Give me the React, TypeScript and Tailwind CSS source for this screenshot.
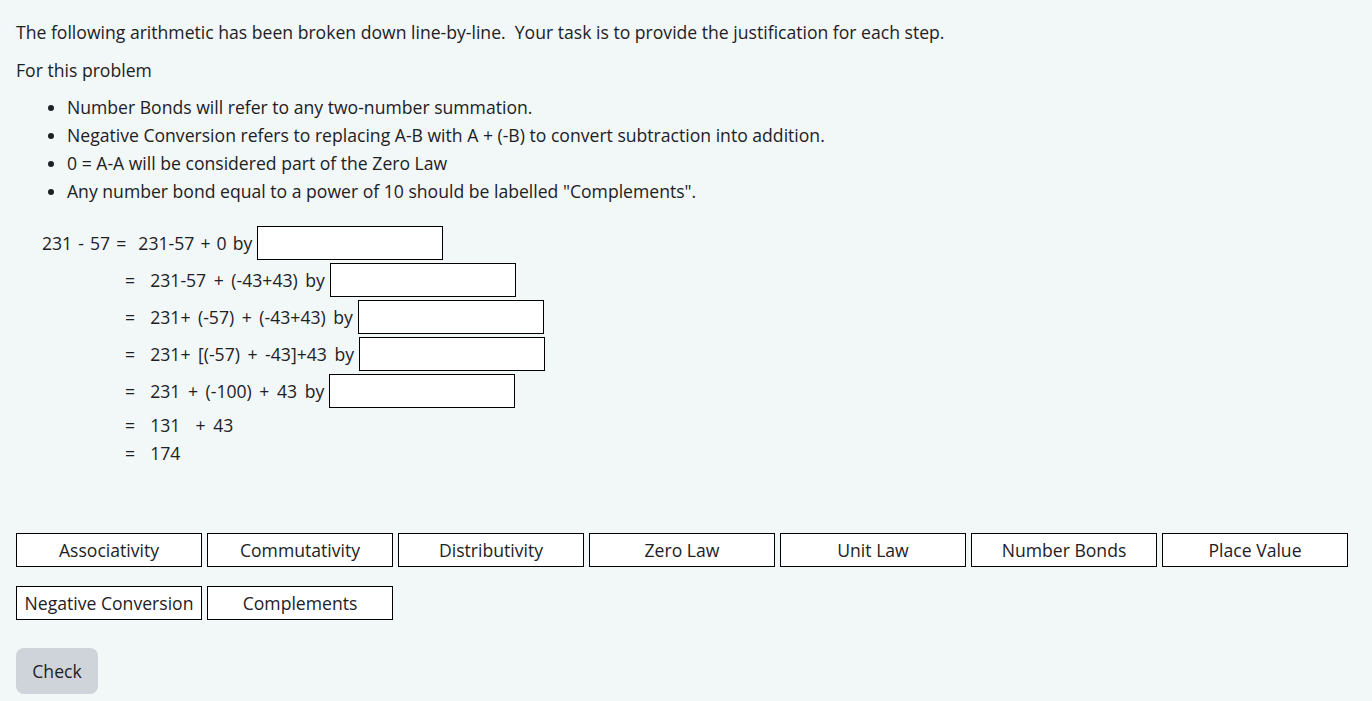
const bullets = [
  "Number Bonds will refer to any two-number summation.",
  "Negative Conversion refers to replacing A-B with A + (-B) to convert subtraction into addition.",
  "0 = A-A will be considered part of the Zero Law",
  'Any number bond equal to a power of 10 should be labelled "Complements".',
];

const steps = [
  { lead: "231 - 57 =\u00a0\u00a0231-57 + 0 by", indent: false },
  { lead: "=\u00a0\u00a0231-57 + (-43+43) by", indent: true },
  { lead: "=\u00a0\u00a0231+ (-57) + (-43+43) by", indent: true },
  { lead: "=\u00a0\u00a0231+ [(-57) + -43]+43 by", indent: true },
  { lead: "=\u00a0\u00a0231 + (-100) + 43 by", indent: true },
];

const choices = [
  "Associativity",
  "Commutativity",
  "Distributivity",
  "Zero Law",
  "Unit Law",
  "Number Bonds",
  "Place Value",
  "Negative Conversion",
  "Complements",
];

function DropBox() {
  return <span className="ml-[5px] inline-block h-[34px] w-[186px] border border-black bg-white align-middle" />;
}

export default function App() {
  return (
    <div
      className="min-h-[701px] bg-[#f2f7f7] px-4 pt-[18px] text-[17.6px] leading-[28px] text-[#1d2125]"
      style={{ fontFamily: '"Open Sans", "Noto Sans", sans-serif' }}
    >
      <p className="mb-[10px]">
        The following arithmetic has been broken down line-by-line.&nbsp; Your task is to provide the justification for each step.
      </p>
      <p>For this problem</p>
      <ul className="mt-[9px] list-disc pl-[51px]">
        {bullets.map((b) => (
          <li key={b}>{b}</li>
        ))}
      </ul>

      <div className="mt-[21px] flex flex-col gap-[3px]">
        {steps.map((s) => (
          <div
            key={s.lead}
            className={`flex items-center ${s.indent ? "pl-[109px] [word-spacing:3px]" : "pl-[26px] [word-spacing:1.5px]"}`}
          >
            <span className="whitespace-pre">{s.lead}</span>
            <DropBox />
          </div>
        ))}
      </div>
      <div className="mt-[3px] pl-[109px] [word-spacing:3px]">
        <div className="whitespace-pre">{"=\u00a0\u00a0131\u00a0 + 43"}</div>
        <div className="whitespace-pre">{"=\u00a0\u00a0174"}</div>
      </div>

      <div className="mt-[66px] flex flex-wrap gap-x-[5px] gap-y-[19px]">
        {choices.map((c) => (
          <div
            key={c}
            className="flex h-[34px] w-[186px] items-center justify-center border border-black bg-white"
          >
            {c}
          </div>
        ))}
      </div>

      <button className="mt-[28px] h-[46px] w-[82px] rounded-lg bg-[#ced4da] text-[#1d2125]">
        Check
      </button>
    </div>
  );
}
